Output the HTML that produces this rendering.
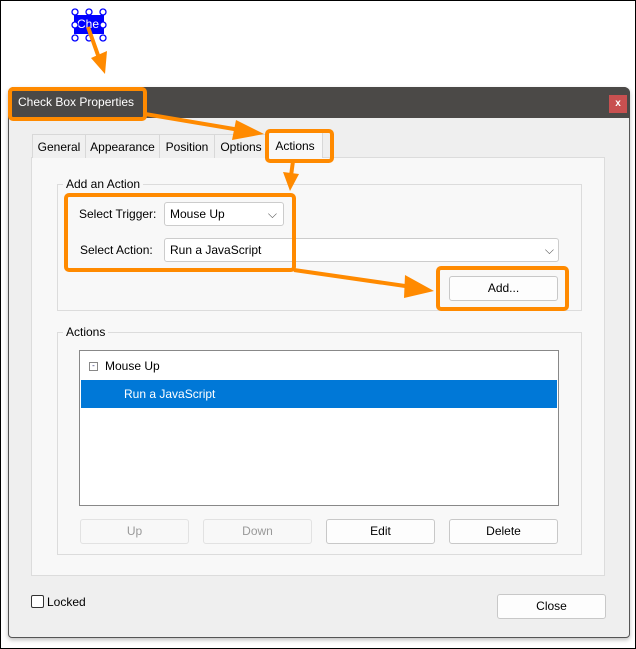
<!DOCTYPE html>
<html><head><style>
*{box-sizing:border-box;margin:0;padding:0}
body{width:636px;height:649px;position:relative;background:#fff;font-family:"Liberation Sans",sans-serif;font-size:12px;color:#000;overflow:hidden}
.a{position:absolute}
.frame{left:0;top:0;width:636px;height:649px;border:1px solid #000}
.dlg{left:8px;top:87px;width:622px;height:551px;background:#efefef;border:1px solid #555;border-radius:6px 6px 4px 4px;box-shadow:0 2px 4px rgba(0,0,0,.25)}
.title{left:8px;top:87px;width:622px;height:31px;background:#4b4947;border-radius:6px 6px 0 0;color:#fff;font-size:12px;line-height:31px;padding-left:10px}
.x{left:609px;top:95px;width:18px;height:18px;background:#c85050;color:#fff;font-size:10px;text-align:center;line-height:17px;font-weight:bold}
.panel{left:31px;top:157px;width:574px;height:419px;background:#f8f8f8;border:1px solid #dcdcdc}
.tab{top:134px;height:24px;background:#f0f0f0;border:1px solid #d8d8d8;border-bottom:none;line-height:24px;text-align:center;font-size:12px}
.grp{border:1px solid #dcdcdc}
.lg{background:#f8f8f8;padding:0 3px;font-size:12px}
.cb{background:#fff;border:1px solid #ccc;border-radius:3px;height:24px;line-height:22px;padding-left:5px}
.btn{background:#fdfdfd;border:1px solid #c8c8c8;border-radius:3px;height:25px;line-height:23px;text-align:center}
.dis{background:#f8f8f8;border-color:#e2e2e2;color:#999}
</style></head><body>
<div class="a frame"></div>
<div class="a dlg"></div>
<div class="a title">Check Box Properties</div>
<div class="a x">x</div>
<div class="a panel"></div>
<div class="a tab" style="left:32px;width:54px">General</div>
<div class="a tab" style="left:85px;width:75px">Appearance</div>
<div class="a tab" style="left:159px;width:56px">Position</div>
<div class="a tab" style="left:214px;width:54px">Options</div>
<div class="a tab" style="left:267px;top:132px;height:26px;width:56px;background:#f8f8f8;line-height:26px">Actions</div>

<div class="a grp" style="left:57px;top:184px;width:525px;height:127px"></div>
<div class="a lg" style="left:63px;top:177px">Add an Action</div>
<div class="a" style="left:79px;top:207px">Select Trigger:</div>
<div class="a cb" style="left:164px;top:202px;width:120px">Mouse Up<span style="position:absolute;right:6px;top:0;color:#555">⌵</span></div>
<div class="a" style="left:80px;top:243px">Select Action:</div>
<div class="a cb" style="left:164px;top:238px;width:395px">Run a JavaScript<span style="position:absolute;right:4px;top:0;color:#555">⌵</span></div>
<div class="a btn" style="left:449px;top:276px;width:109px">Add...</div>

<div class="a grp" style="left:57px;top:332px;width:525px;height:223px"></div>
<div class="a lg" style="left:63px;top:325px">Actions</div>
<div class="a" style="left:79px;top:350px;width:480px;height:156px;background:#fff;border:1px solid #888"></div>
<div class="a" style="left:89px;top:362px;width:9px;height:9px;border:1px solid #888;font-size:8px;line-height:6px;text-align:center;color:#226">-</div>
<div class="a" style="left:105px;top:359px">Mouse Up</div>
<div class="a" style="left:81px;top:380px;width:476px;height:28px;background:#0078d7;color:#fff;line-height:28px;padding-left:43px">Run a JavaScript</div>
<div class="a btn dis" style="left:80px;top:519px;width:109px">Up</div>
<div class="a btn dis" style="left:203px;top:519px;width:109px">Down</div>
<div class="a btn" style="left:326px;top:519px;width:109px">Edit</div>
<div class="a btn" style="left:449px;top:519px;width:109px">Delete</div>

<div class="a" style="left:31px;top:595px;width:13px;height:13px;border:1px solid #333;border-radius:2px;background:#fff"></div>
<div class="a" style="left:47px;top:595px">Locked</div>
<div class="a btn" style="left:497px;top:594px;width:109px">Close</div>

<div class="a" style="left:74px;top:15px;width:30px;height:19px;background:#0000ff;color:#fff;font-size:12px;line-height:19px;padding-left:3px;overflow:hidden">Che</div>
<svg class="a" style="left:0;top:0" width="636" height="649">
<g fill="#fff" stroke="#0000ff" stroke-width="1.3">
<circle cx="75" cy="12" r="3"/><circle cx="89" cy="12" r="3"/><circle cx="103" cy="12" r="3"/>
<circle cx="75" cy="25" r="3"/><circle cx="103" cy="25" r="3"/>
<circle cx="75" cy="38" r="3"/><circle cx="89" cy="38" r="3"/><circle cx="103" cy="38" r="3"/>
</g>
<g stroke="#ff8a00" stroke-width="4" fill="none" stroke-linejoin="round">
<rect x="10" y="89" width="135" height="30" rx="3"/>
<rect x="267" y="131" width="65" height="30" rx="3"/>
<rect x="66" y="195" width="228" height="75" rx="3"/>
<rect x="438" y="268" width="129" height="41" rx="3"/>
<line x1="88" y1="27" x2="99" y2="58"/>
<line x1="145" y1="114" x2="240" y2="130"/>
<line x1="293" y1="161" x2="291" y2="176"/>
<line x1="294" y1="270" x2="412" y2="287"/>
</g>
<g fill="#ff8a00">
<polygon points="91,58 105,74 107,51"/>
<polygon points="236,120 264,134 232,140"/>
<polygon points="283,172 290,191 299,174"/>
<polygon points="405,275 434,291 404,298"/>
</g>
</svg>
</body></html>
